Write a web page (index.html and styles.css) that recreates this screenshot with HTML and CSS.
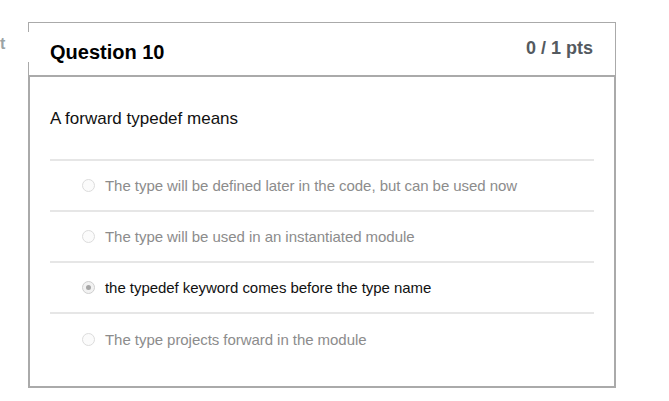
FILE: index.html
```html
<!doctype html>
<html>
<head lang='en'>
  <meta charset='utf-8'>
  <meta name='viewport' content='width=device-width'>
  <title>Question 10</title>
  <link rel="stylesheet" href="styles.css">
</head>
<body>
<div class="page">
  <div class="side-label">t</div>

  <div class="question">
    <div class="question__header">
      <h2 class="question__title">Question 10</h2>
      <span class="question__points">0 / 1 pts</span>
    </div>

    <div class="question__body">
      <p class="question__text">A forward typedef means</p>

      <ul class="answers">
        <li class="answer">
          <span class="radio"></span>
          <span class="answer__label">The type will be defined later in the code, but can be used now</span>
        </li>
        <li class="answer">
          <span class="radio"></span>
          <span class="answer__label">The type will be used in an instantiated module</span>
        </li>
        <li class="answer answer--selected">
          <span class="radio radio--checked"></span>
          <span class="answer__label">the typedef keyword comes before the type name</span>
        </li>
        <li class="answer">
          <span class="radio"></span>
          <span class="answer__label">The type projects forward in the module</span>
        </li>
      </ul>
    </div>
  </div>
</div>
</body>
</html>
```

FILE: styles.css
```css
html, body, p, ul, li, h1, h2, h3 {
  margin: 0;
  padding: 0;
}

h1, h2, h3 {
  font-size: 100%;
  font-weight: normal;
}

ul {
  list-style: none;
}

html {
  box-sizing: border-box;
}

*, *:before, *:after {
  box-sizing: inherit;
}

body {
  font-family: 'Liberation Sans', Arial, sans-serif;
  color: #111;
  background: #fff;
}

.page {
  position: relative;
  padding: 22px 0 0 28px;
}

/* cut-off label from the left column, sits over the card edge */
.side-label {
  position: absolute;
  left: 0;
  top: 32px;
  width: 31px;
  height: 30px;
  background: #fff;
  color: #9aa4a5;
  font-weight: bold;
  font-size: 16px;
  line-height: 24px;
}

.question {
  width: 588px;
}

.question__header {
  display: flex;
  justify-content: space-between;
  align-items: flex-start;
  height: 53px;
  border: 1px solid #aaa;
  border-bottom: 0;
  padding: 0 22px 0 21px;
}

.question__title {
  font-size: 20px;
  font-weight: bold;
  color: #000;
  line-height: 23px;
  margin-top: 18px;
}

.question__points {
  font-size: 18px;
  font-weight: bold;
  color: #545a60;
  line-height: 21px;
  margin-top: 15px;
}

.question__body {
  border: 2px solid #aaa;
  padding: 32px 20px 22px 20px;
}

.question__text {
  font-size: 17px;
  line-height: 20px;
  color: #111;
  margin-bottom: 30px;
}

.answer {
  display: flex;
  align-items: center;
  height: 51px;
  border-top: 2px solid #e6e6e6;
  padding-left: 32px;
  font-size: 15px;
  letter-spacing: -0.05px;
  color: #8c8c8c;
}

.answer:last-child {
  height: 52px;
}

.answer--selected {
  color: #111;
}

.radio {
  display: flex;
  align-items: center;
  justify-content: center;
  width: 13px;
  height: 13px;
  border: 1px solid #dcdcdc;
  border-radius: 50%;
  background: #fbfbfb;
  margin-right: 10px;
}

.radio--checked {
  border-color: #cfcfcf;
  background: #f2f2f2;
}

.radio--checked:after {
  content: '';
  width: 5px;
  height: 5px;
  border-radius: 50%;
  background: #a6a6a6;
}
```
